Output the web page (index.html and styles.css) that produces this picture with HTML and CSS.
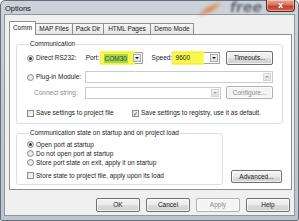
FILE: index.html
```html
<!DOCTYPE html>
<html>
<head>
<meta charset="utf-8">
<link rel="stylesheet" href="styles.css">
</head>
<body>
<div class="window">
  <div class="titlebar">
    <span class="title">Options</span>
    <span class="blob"></span>
    <span class="brand">free</span>
    <div class="close"><span>x</span></div>
  </div>
  <div class="client">
    <div class="tabs">
      <div class="tab active">Comm</div>
      <div class="tab w-map">MAP Files</div>
      <div class="tab w-pack">Pack Dir</div>
      <div class="tab w-html">HTML Pages</div>
      <div class="tab w-demo">Demo Mode</div>
    </div>
    <div class="panel">
      <fieldset class="group g1">
        <legend>Communication</legend>
        <div class="row r1">
          <div class="opt w-direct"><span class="radio on"></span><span>Direct RS232:</span></div>
          <span class="lbl w-port">Port:</span>
          <div class="combo c-port"><span class="hl hl-port"><span class="sel">COM30</span></span><span class="fill"></span><span class="arrow"></span></div>
          <span class="lbl w-speed">Speed:</span>
          <div class="combo c-speed"><span class="hl hl-speed">9600</span><span class="fill"></span><span class="arrow"></span></div>
          <div class="btn b-timeouts">Timeouts...</div>
        </div>
        <div class="row r2">
          <div class="opt w-plugin"><span class="radio"></span><span>Plug-in Module:</span></div>
          <div class="combo dis c-plugin"><span class="fill"></span><span class="arrow"></span></div>
        </div>
        <div class="row r3">
          <span class="lbl dimtext w-conn">Connect string:</span>
          <div class="combo dis c-conn"><span class="fill"></span><span class="arrow"></span></div>
          <div class="btn dis b-config">Configure...</div>
        </div>
        <div class="row r4">
          <div class="opt w-savep"><span class="check"></span><span>Save settings to project file</span></div>
          <div class="opt"><span class="check on">&#10003;</span><span>Save settings to registry, use it as default.</span></div>
        </div>
      </fieldset>
      <div class="g2wrap">
        <fieldset class="group g2">
          <legend>Communication state on startup and on project load</legend>
          <div class="row rr first"><div class="opt"><span class="radio on"></span><span>Open port at startup</span></div></div>
          <div class="row rr"><div class="opt"><span class="radio"></span><span>Do not open port at startup</span></div></div>
          <div class="row rr"><div class="opt"><span class="radio"></span><span>Store port state on exit, apply it on startup</span></div></div>
          <div class="row rc"><div class="opt"><span class="check"></span><span>Store state to project file, apply upon its load</span></div></div>
        </fieldset>
        <div class="btn b-adv">Advanced...</div>
      </div>
    </div>
    <div class="buttons">
      <div class="btn b-main">OK</div>
      <div class="btn b-main">Cancel</div>
      <div class="btn b-main dis">Apply</div>
      <div class="btn b-main">Help</div>
    </div>
  </div>
</div>
</body>
</html>
```
FILE: styles.css
```css
* { box-sizing: border-box; }
html, body { margin: 0; padding: 0; background: #ffffff; }
body {
  font-family: "Liberation Sans", Arial, sans-serif;
  font-size: 6.5px;
  line-height: 8px;
  color: #1a1a1a;
}
.window {
  width: 299px;
  height: 221px;
  border: 1px solid #66707b;
  border-radius: 5px 5px 2px 2px;
  background: linear-gradient(#cbd2d9, #c2c9d1 40%, #bcc4cd);
  padding: 0 3px 4px 3px;
  display: flex;
  flex-direction: column;
}
.titlebar {
  height: 13px;
  display: flex;
  align-items: flex-start;
  overflow: visible;
}
.title {
  font-size: 7.5px;
  line-height: 9px;
  margin: 3px 0 0 1px;
  color: #111;
}
.blob {
  width: 28px;
  height: 8px;
  margin: 4px 0 0 auto;
  background: radial-gradient(ellipse at center, rgba(226,110,60,0.9), rgba(230,140,80,0.35) 55%, rgba(0,0,0,0) 75%);
  transform: rotate(-28deg);
  filter: blur(1.2px);
}
.brand {
  margin: -1px 0 0 6px;
  font-family: "DejaVu Sans", sans-serif;
  font-weight: bold;
  font-style: italic;
  font-size: 14px;
  line-height: 15px;
  color: rgba(80,84,92,0.8);
  filter: blur(0.9px);
  width: 36px;
  overflow: hidden;
  white-space: nowrap;
}
.close {
  width: 29px;
  height: 12px;
  margin-top: -1px;
  border: 1px solid #5e2a24;
  border-top: none;
  border-radius: 0 0 4px 4px;
  background: linear-gradient(#e9a99b, #d9725f 45%, #c4412d 55%, #d0604a);
  display: flex;
  align-items: center;
  justify-content: center;
  box-shadow: inset 0 0 0 1px rgba(255,220,210,0.5);
}
.close span {
  color: #ffffff;
  font-family: "DejaVu Sans", sans-serif;
  font-weight: bold;
  font-size: 8px;
  line-height: 8px;
  text-shadow: 0 0 1px #6a1a10;
}
.client {
  flex: 1;
  background: #f0f0f0;
  border: 1px solid #8e98a3;
  padding: 6px 2px 0 4px;
  display: flex;
  flex-direction: column;
}
.tabs {
  display: flex;
  height: 13px;
  align-items: flex-end;
}
.tab {
  height: 11px;
  border: 1px solid #8c8f96;
  border-bottom: none;
  margin-left: -1px;
  background: linear-gradient(#f6f6f6, #e6e6e6);
  display: flex;
  align-items: center;
  justify-content: center;
  white-space: nowrap;
  border-radius: 1px 1px 0 0;
}
.tab.active {
  margin-left: 0;
  width: 27px;
  height: 14px;
  margin-bottom: -1px;
  background: #ffffff;
  position: relative;
  z-index: 1;
  padding-bottom: 1px;
}
.w-map { width: 38px; }
.w-pack { width: 32px; }
.w-html { width: 48px; }
.w-demo { width: 44px; }
.panel {
  height: 156px;
  background: #ffffff;
  border: 1px solid #8c8f96;
  padding: 5px 0 0 6px;
}
.group {
  margin: 0;
  border: 1px solid #d5dfe5;
  border-radius: 3px;
  min-width: 0;
}
.group legend {
  padding: 0 1px;
  margin-left: 2px;
  line-height: 8px;
  color: #1a1a1a;
}
.g1 {
  width: 267px;
  padding: 0 9px 5px 10px;
}
.row {
  display: flex;
  align-items: center;
  white-space: nowrap;
}
.r1 { margin-top: 3px; height: 14px; }
.r2 { margin-top: 6px; height: 12px; }
.r3 { margin-top: 3px; height: 13px; }
.r4 { margin-top: 9px; height: 10px; }
.opt {
  display: flex;
  align-items: center;
  gap: 2px;
}
.w-direct { width: 59px; }
.w-plugin { width: 58px; }
.w-savep { width: 105px; }
.lbl { display: block; }
.w-port { width: 14px; }
.w-speed { width: 20px; margin-left: 9px; }
.w-conn { width: 58px; padding-left: 7px; }
.dimtext { color: #8a8a8a; }
.radio {
  width: 7px;
  height: 7px;
  border-radius: 50%;
  border: 1px solid #8a8d92;
  background: radial-gradient(circle, #f4f4f4, #dcdcdc);
  display: flex;
  align-items: center;
  justify-content: center;
  flex: 0 0 7px;
}
.radio.on::after {
  content: "";
  width: 3px;
  height: 3px;
  border-radius: 50%;
  background: #2b3a44;
}
.check {
  width: 7px;
  height: 7px;
  border: 1px solid #8a8d92;
  background: linear-gradient(135deg, #e2e2e2, #fbfbfb);
  flex: 0 0 7px;
  font-size: 6px;
  line-height: 5px;
  text-align: center;
  font-family: "DejaVu Sans", sans-serif;
  font-weight: bold;
  color: #222;
  overflow: hidden;
}
.combo {
  height: 12px;
  border: 1px solid #9fa3aa;
  background: #ffffff;
  display: flex;
  align-items: center;
  padding: 1px;
}
.combo .fill { flex: 1; }
.combo .arrow {
  width: 8px;
  height: 8px;
  border: 1px solid #a8acb2;
  background: linear-gradient(#f4f4f4, #e0e0e0);
  display: flex;
  align-items: center;
  justify-content: center;
}
.combo .arrow::after {
  content: "";
  border-left: 2px solid transparent;
  border-right: 2px solid transparent;
  border-top: 2px solid #111;
}
.combo.dis { border-color: #c9ccd0; }
.combo.dis .arrow { border-color: #d4d6d9; }
.combo.dis .arrow::after { border-top-color: #a0a0a0; }
.c-port { width: 43px; }
.c-speed { width: 49px; }
.c-plugin { width: 188px; }
.c-conn { width: 137px; }
.hl {
  background: #f8f84a;
  box-shadow: 0 0 1px 2px rgba(248,248,80,0.85);
  height: 10px;
  display: flex;
  align-items: center;
  color: #222;
}
.hl-port { width: 32px; padding-left: 2px; }
.hl-speed { width: 28px; padding-left: 2px; }
.sel {
  background: #a9d64a;
  color: #24462a;
  padding: 0 1px;
  line-height: 9px;
}
.btn {
  height: 14px;
  border: 1px solid #707070;
  border-radius: 2px;
  background: linear-gradient(#f3f3f3, #ebebeb 50%, #dddddd 51%, #cfcfcf);
  box-shadow: inset 0 0 0 1px rgba(255,255,255,0.7);
  display: flex;
  align-items: center;
  justify-content: center;
  white-space: nowrap;
  color: #1a1a1a;
}
.btn.dis {
  border-color: #adb2b5;
  background: #f4f4f4;
  color: #8c8c8c;
}
.b-timeouts { width: 47px; margin-left: 6px; }
.b-config { width: 47px; margin-left: 5px; height: 13px; }
.g2wrap {
  display: flex;
  align-items: flex-end;
  margin-top: 5px;
}
.g2 {
  width: 207px;
  padding: 0 4px 4px 10px;
}
.rr { height: 9px; }
.rr.first { margin-top: 3px; }
.rc { height: 9px; margin-top: 4px; }
.b-adv {
  width: 51px;
  height: 13px;
  margin: 0 0 2px 8px;
}
.buttons {
  display: flex;
  justify-content: flex-end;
  gap: 6px;
  margin-top: 8px;
  margin-right: 2px;
}
.b-main { width: 44px; height: 14px; }
```
